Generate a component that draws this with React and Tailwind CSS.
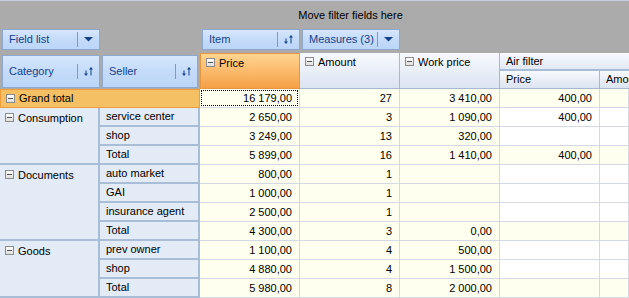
import React from 'react';

const font = "font-['Liberation_Sans',Arial,sans-serif]";

const Minus = () => (
  <span className="inline-flex w-[9px] h-[9px] shrink-0 items-center justify-center border border-[#8c8c8c] bg-gradient-to-b from-white to-[#dedede]">
    <span className="block w-[5px] h-px bg-[#555]"></span>
  </span>
);

const SortIcon = () => (
  <svg width="11" height="11" viewBox="0 0 11 11" className="shrink-0">
    <path d="M3 4.5v3.5" stroke="#15428b" strokeWidth="1" />
    <path d="M1 7.5h4L3 10z" fill="#15428b" />
    <path d="M8 2v7.5" stroke="#15428b" strokeWidth="1" />
    <path d="M6 3.5h4L8 1z" fill="#15428b" />
  </svg>
);

const DropIcon = () => (
  <svg width="9" height="5" viewBox="0 0 9 5" className="shrink-0">
    <path d="M0 0h9L4.5 4.5z" fill="#15428b" />
  </svg>
);

const FieldButton = ({ label, icon, className }) => (
  <div className={`flex items-center border border-[#8ca8cf] bg-gradient-to-b from-[#d6e7fc] via-[#c4dbf9] to-[#bcd6f8] text-[#15428b] ${className}`}>
    <span className="flex-1 pl-[6px] truncate">{label}</span>
    <span className="w-px h-[15px] bg-[#7d9bc4]"></span>
    <span className="w-[21px] flex items-center justify-center">{icon === 'sort' ? <SortIcon /> : <DropIcon />}</span>
  </div>
);

const groups = [
  {
    name: 'Consumption',
    rows: [
      ['service center', '2 650,00', '3', '1 090,00', '400,00', ''],
      ['shop', '3 249,00', '13', '320,00', '', ''],
      ['Total', '5 899,00', '16', '1 410,00', '400,00', ''],
    ],
  },
  {
    name: 'Documents',
    rows: [
      ['auto market', '800,00', '1', '', '', ''],
      ['GAI', '1 000,00', '1', '', '', ''],
      ['insurance agent', '2 500,00', '1', '', '', ''],
      ['Total', '4 300,00', '3', '0,00', '', ''],
    ],
  },
  {
    name: 'Goods',
    rows: [
      ['prev owner', '1 100,00', '4', '500,00', '', ''],
      ['shop', '4 880,00', '4', '1 500,00', '', ''],
      ['Total', '5 980,00', '8', '2 000,00', '', ''],
    ],
  },
];

const rowHead = 'border-r-2 border-b-2 border-[#a9bdd6] bg-[#e3ebf6]';
const cell = 'flex items-center justify-end pr-[7px] border-r border-b border-[#d3dae6]';

export default function App() {
  return (
    <div className={`w-[629px] h-[298px] overflow-hidden bg-[#ababab] text-[11px] text-black ${font}`}>
      {/* filter area, the control is wider than the shot so the caption sits right of centre */}
      <div className="h-[29px] flex items-center justify-center pl-[72px] border-t border-[#c3cfdd]">Move filter fields here</div>

      <div className="h-[21px] flex">
        <FieldButton label="Field list" icon="drop" className="ml-[2px] w-[98px]" />
        <FieldButton label="Item" icon="sort" className="ml-[102px] w-[98px]" />
        <FieldButton label="Measures (3)" icon="drop" className="ml-[2px] w-[98px]" />
      </div>

      {/* column header */}
      <div className="mt-[3px] h-[36px] flex">
        <div className="w-[200px] flex pt-[2px] pb-[1px]">
          <FieldButton label="Category" icon="sort" className="ml-[2px] w-[98px]" />
          <FieldButton label="Seller" icon="sort" className="ml-[2px] w-[96px]" />
        </div>
        <div className="w-[100px] flex items-start gap-[4px] pl-[5px] pt-[4px] border border-[#e7963f] bg-gradient-to-b from-[#fed58f] via-[#fbba6c] to-[#f59f45]">
          <Minus />
          <span className="leading-[10px]">Price</span>
        </div>
        <div className="w-[100px] flex items-start gap-[4px] pl-[5px] pt-[4px] border-r border-b border-[#a5b9d3] bg-gradient-to-b from-[#f7f9fd] to-[#dce4f1]">
          <Minus />
          <span className="leading-[10px]">Amount</span>
        </div>
        <div className="w-[100px] flex items-start gap-[4px] pl-[5px] pt-[4px] border-r border-b border-[#a5b9d3] bg-gradient-to-b from-[#f7f9fd] to-[#dce4f1]">
          <Minus />
          <span className="leading-[10px]">Work price</span>
        </div>
        <div className="w-[129px] flex flex-col">
          <div className="h-[18px] flex items-center pl-[6px] border-b-2 border-[#a9bdd6] bg-gradient-to-b from-[#f7f9fd] to-[#e2e9f4]">Air filter</div>
          <div className="flex-1 flex">
            <div className="w-[100px] flex items-center pl-[6px] border-r border-b border-[#a5b9d3] bg-gradient-to-b from-[#f7f9fd] to-[#dce4f1]">Price</div>
            <div className="w-[29px] flex items-center pl-[6px] border-b border-[#a5b9d3] bg-gradient-to-b from-[#f7f9fd] to-[#dce4f1] whitespace-nowrap overflow-hidden">Amount</div>
          </div>
        </div>
      </div>

      {/* body */}
      <div className="grid grid-cols-[100px_100px_100px_100px_100px_100px_29px] auto-rows-[19px] bg-white">
        <div className="col-span-2 flex items-center gap-[4px] pl-[5px] bg-[#f4c063] border border-[#ee9e3c]">
          <Minus />
          <span>Grand total</span>
        </div>
        <div className={`${cell} bg-[#fffff0] relative`}>
          <span className="absolute inset-[1px] border border-dotted border-black"></span>
          16 179,00
        </div>
        <div className={`${cell} bg-[#fffff0]`}>27</div>
        <div className={`${cell} bg-[#fffff0]`}>3 410,00</div>
        <div className={`${cell} bg-[#fffff0]`}>400,00</div>
        <div className={`${cell} bg-[#fffff0]`}></div>

        {groups.map((g) => (
          <React.Fragment key={g.name}>
            <div
              className={`${rowHead} flex items-start gap-[4px] pl-[5px] pt-[5px] ${g.rows.length === 3 ? 'row-span-3' : 'row-span-4'}`}
            >
              <Minus />
              <span className="leading-[10px]">{g.name}</span>
            </div>
            {g.rows.map((r, i) => {
              const total = r[0] === 'Total';
              return (
                <React.Fragment key={i}>
                  <div className={`${rowHead} flex items-center pl-[6px]`}>{r[0]}</div>
                  <div className={`${cell} bg-[#fffff0]`}>{r[1]}</div>
                  <div className={`${cell} bg-[#fffff0]`}>{r[2]}</div>
                  <div className={`${cell} bg-[#fffff0]`}>{r[3]}</div>
                  <div className={`${cell} ${total ? 'bg-[#fffff0]' : 'bg-white'}`}>{r[4]}</div>
                  <div className={`${cell} ${total ? 'bg-[#fffff0]' : 'bg-white'}`}>{r[5]}</div>
                </React.Fragment>
              );
            })}
          </React.Fragment>
        ))}
      </div>
    </div>
  );
}
